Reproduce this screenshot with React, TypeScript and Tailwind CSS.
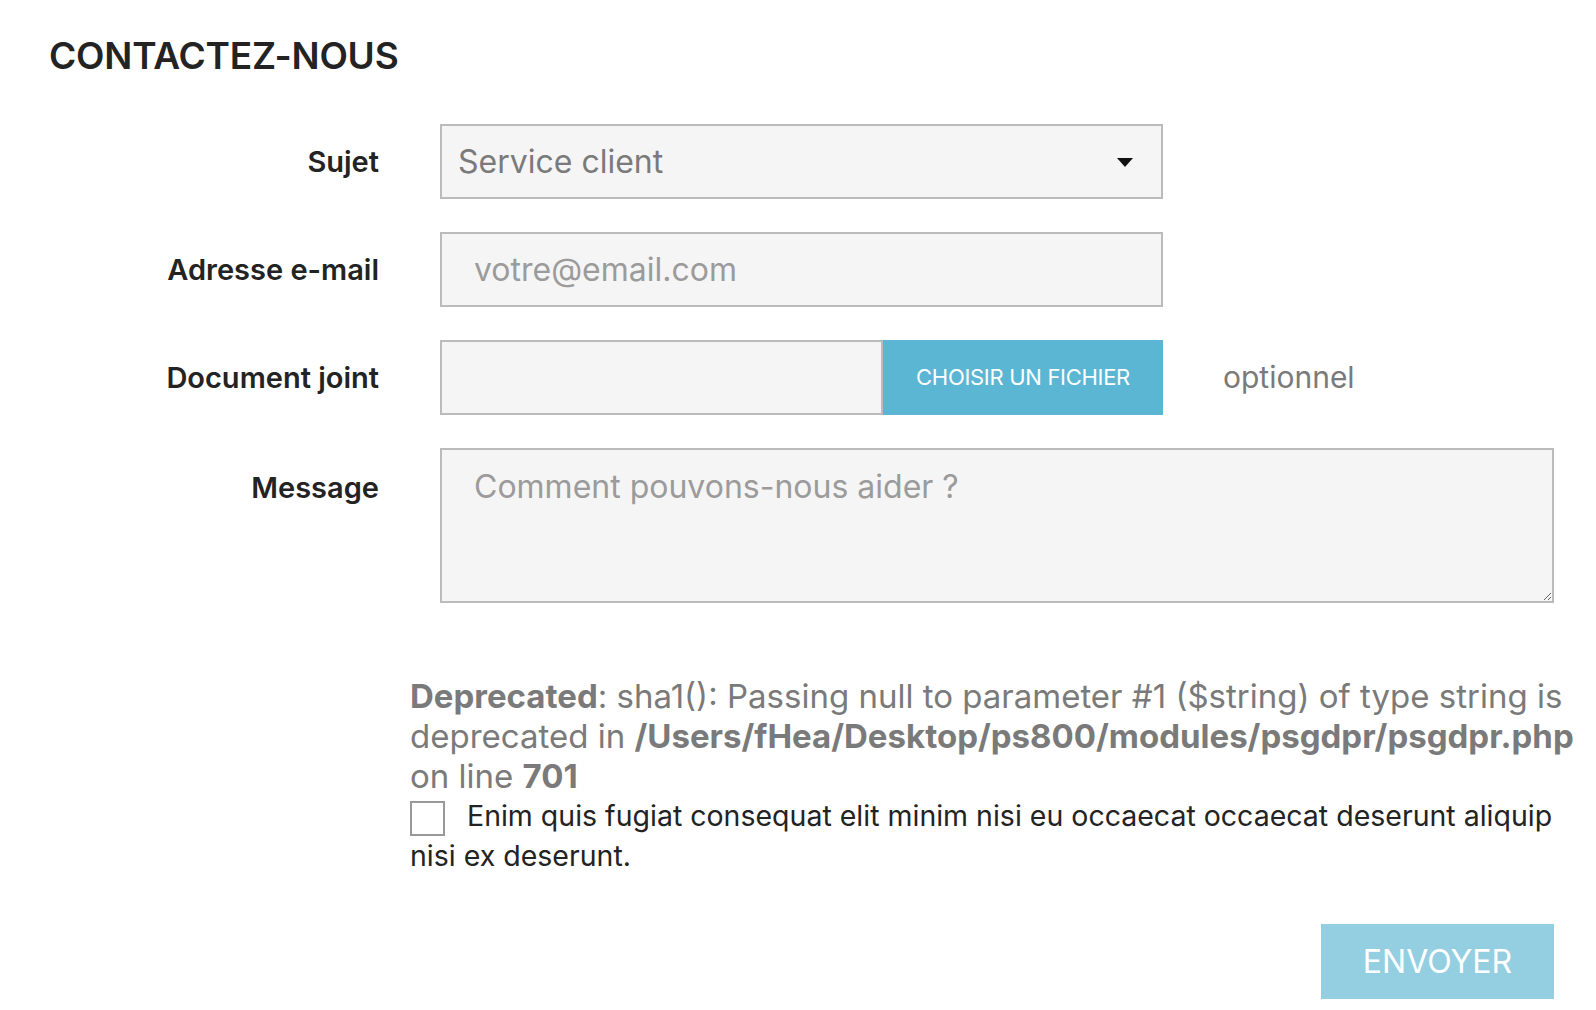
import { ChangeEvent, useState } from 'react'

const font = { fontFamily: 'Inter, "Noto Sans", sans-serif' }

function Label({ children, tall }: { children: React.ReactNode; tall?: boolean }) {
  return (
    <div
      className={`w-[330px] shrink-0 flex items-center justify-end text-[29px] font-semibold text-[#232323] ${tall ? 'h-[80px]' : 'h-[75px]'}`}
    >
      {children}
    </div>
  )
}

export default function App() {
  const [subject, setSubject] = useState('Service client')
  const [agree, setAgree] = useState(false)

  return (
    <div className="min-h-screen bg-white px-[49px] pt-[32px]" style={font}>
      <h1 className="text-[37px] leading-[48px] font-semibold text-[#232323] tracking-[-0.2px]">CONTACTEZ-NOUS</h1>

      <form className="mt-[44px] flex flex-col gap-[33px]" onSubmit={(e) => e.preventDefault()}>
        <div className="flex items-center gap-[61px]">
          <Label>Sujet</Label>
          <div className="relative w-[723px] h-[75px] shrink-0">
            <select
              value={subject}
              onChange={(e: ChangeEvent<HTMLSelectElement>) => setSubject(e.target.value)}
              className="appearance-none w-full h-full border-2 border-[#bbbbbb] bg-[#f5f5f5] pl-[16px] text-[32px] text-[#7a7a7a] outline-none"
            >
              <option>Service client</option>
              <option>Webmaster</option>
            </select>
            <svg className="pointer-events-none absolute right-[30px] top-[34px]" width="16" height="10" viewBox="0 0 16 10">
              <path d="M0 0 L16 0 L8 9 Z" fill="#111" />
            </svg>
          </div>
        </div>

        <div className="flex items-center gap-[61px]">
          <Label>Adresse e-mail</Label>
          <input
            type="email"
            placeholder="votre@email.com"
            className="w-[723px] h-[75px] shrink-0 border-2 border-[#bbbbbb] bg-[#f5f5f5] px-[32px] text-[32px] text-[#7a7a7a] placeholder:text-[#9b9b9b] outline-none"
          />
        </div>

        <div className="flex items-center gap-[61px]">
          <Label>Document joint</Label>
          <div className="flex w-[723px] h-[75px] shrink-0">
            <div className="flex-1 border-2 border-[#bbbbbb] bg-[#f5f5f5]" />
            <button type="button" className="w-[280px] h-full bg-[#5bb6d3] text-white text-[22px] tracking-[-0.3px]">
              CHOISIR UN FICHIER
            </button>
          </div>
          <span className="text-[30px] text-[#7a7a7a] -ml-[1px]">optionnel</span>
        </div>

        <div className="flex items-start gap-[61px]">
          <Label tall>Message</Label>
          <textarea
            placeholder="Comment pouvons-nous aider ?"
            className="w-[1114px] h-[155px] shrink-0 border-2 border-[#bbbbbb] bg-[#f5f5f5] px-[32px] pt-[15px] text-[32px] leading-[44px] text-[#7a7a7a] placeholder:text-[#9b9b9b] outline-none"
          />
        </div>
      </form>

      <div className="ml-[361px] mt-[73px] text-[33px] leading-[40px] text-[#7a7a7a]">
        <div className="whitespace-nowrap">
          <b className="font-bold">Deprecated</b>: sha1(): Passing null to parameter #1 ($string) of type string is
        </div>
        <div className="whitespace-nowrap">
          deprecated in <b className="font-bold">/Users/fHea/Desktop/ps800/modules/psgdpr/psgdpr.php</b>
        </div>
        <div className="whitespace-nowrap">
          on line <b className="font-bold">701</b>
        </div>
        <label className="block text-[28.5px] text-[#232323] cursor-pointer">
          <span className="whitespace-nowrap">
            <button
              type="button"
              onClick={() => setAgree(!agree)}
              className="inline-block align-[-8px] w-[35px] h-[35px] border-2 border-[#999999] bg-white mr-[22px]"
            >
              {agree && <span className="block w-full h-full bg-[#5bb6d3]" />}
            </button>
            Enim quis fugiat consequat elit minim nisi eu occaecat occaecat deserunt aliquip
          </span>
          <br />
          nisi ex deserunt.
        </label>
      </div>

      <div className="w-[1505px] flex justify-end mt-[48px]">
        <button type="submit" className="w-[233px] h-[75px] bg-[#94cee1] text-white text-[32px]">
          ENVOYER
        </button>
      </div>
    </div>
  )
}
